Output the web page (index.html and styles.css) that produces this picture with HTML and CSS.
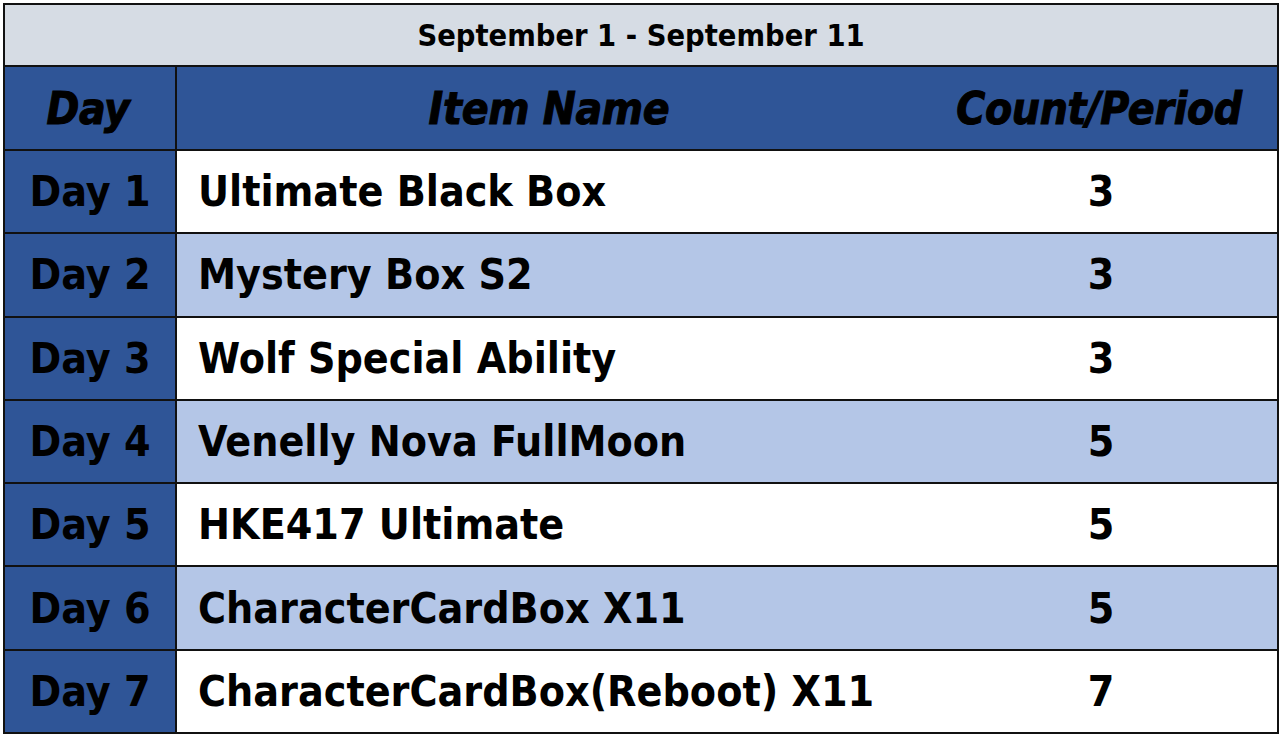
FILE: index.html
```html
<!DOCTYPE html>
<html>
<head>
<meta charset="utf-8">
<link rel="stylesheet" href="styles.css">
</head>
<body>
<table class="sched">
  <colgroup>
    <col class="c-day">
    <col class="c-item">
    <col class="c-count">
  </colgroup>
  <thead>
    <tr class="title-row"><th colspan="3">September 1 - September 11</th></tr>
    <tr class="head-row">
      <th class="h-day">Day</th>
      <th class="h-item">Item Name</th>
      <th class="h-count">Count/Period</th>
    </tr>
  </thead>
  <tbody>
    <tr class="odd"><td class="day">Day 1</td><td class="item">Ultimate Black Box</td><td class="count">3</td></tr>
    <tr class="even"><td class="day">Day 2</td><td class="item">Mystery Box S2</td><td class="count">3</td></tr>
    <tr class="odd"><td class="day">Day 3</td><td class="item">Wolf Special Ability</td><td class="count">3</td></tr>
    <tr class="even"><td class="day">Day 4</td><td class="item">Venelly Nova FullMoon</td><td class="count">5</td></tr>
    <tr class="odd"><td class="day">Day 5</td><td class="item">HKE417 Ultimate</td><td class="count">5</td></tr>
    <tr class="even"><td class="day">Day 6</td><td class="item">CharacterCardBox X11</td><td class="count">5</td></tr>
    <tr class="odd"><td class="day">Day 7</td><td class="item">CharacterCardBox(Reboot) X11</td><td class="count">7</td></tr>
  </tbody>
</table>
</body>
</html>
```
FILE: styles.css
```css
html, body {
  margin: 0;
  padding: 0;
  background: #ffffff;
}
body {
  padding: 3px 0 0 3px;
  font-family: "DejaVu Sans Condensed", "DejaVu Sans", sans-serif;
  color: #000;
}
.sched {
  border-collapse: collapse;
  table-layout: fixed;
  width: 1274px;
  border: 2px solid #111;
}
.c-day { width: 172px; }
.c-item { width: 745px; }
.c-count { width: 357px; }

.sched th, .sched td {
  padding: 0;
  border-top: 2px solid #111;
  border-bottom: 2px solid #111;
}
.title-row th {
  height: 60px;
  background: #d6dce4;
  font-size: 30.5px;
  font-weight: bold;
  text-align: center;
}
.head-row th {
  height: 82px;
  background: #2f5597;
  font-size: 44px;
  font-weight: bold;
  font-style: italic;
  letter-spacing: -0.3px;
  -webkit-text-stroke: 1px #000;
  text-align: center;
}
.head-row .h-day { border-right: 2px solid #111; padding-right: 4px; }
.head-row .h-count { padding-left: 0; }

tbody td {
  height: 81.3px;
  font-size: 42.5px;
  font-weight: bold;
}
tbody .day {
  background: #2f5597;
  text-align: center;
  border-right: 2px solid #111;
}
tbody .item {
  padding-left: 21px;
  text-align: left;
}
tbody .count {
  text-align: center;
  padding-left: 4px;
}
tbody .odd .item, tbody .odd .count { background: #ffffff; }
tbody .even .item, tbody .even .count { background: #b4c6e7; }
```
